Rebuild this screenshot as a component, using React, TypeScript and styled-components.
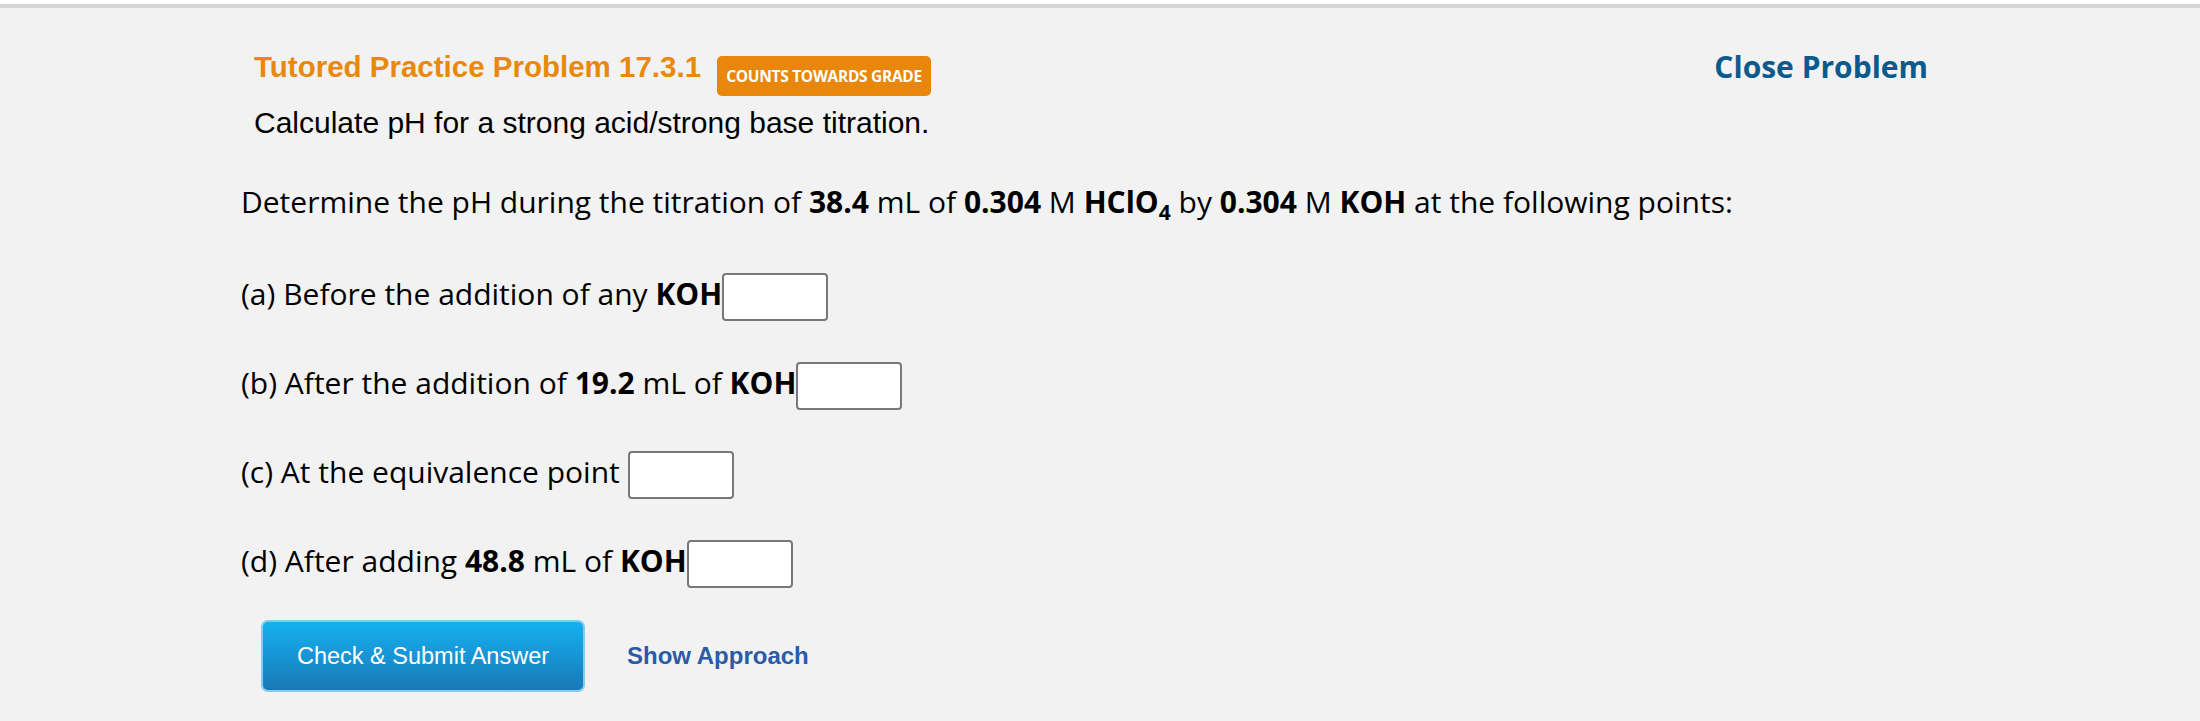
import React from "react";
import styled, { createGlobalStyle } from "styled-components";

const Global = createGlobalStyle`
  html, body { margin: 0; padding: 0; background: #ffffff; }
  #root { min-height: 721px; }
`;

const Page = styled.div`
  padding-top: 4px;
  min-height: 717px;
  display: flex;
  flex-direction: column;
`;

const TopBar = styled.div`
  height: 4px;
  background: #d6d6d6;
`;

const Panel = styled.main`
  flex: 1;
  background: #f2f2f2;
  padding: 39px 272px 0 241px;
  display: flex;
  flex-direction: column;
`;

const Header = styled.header`
  padding-left: 13px;
  display: flex;
  flex-direction: column;
`;

const HeaderRow = styled.div`
  display: flex;
  align-items: flex-start;
`;

const Title = styled.h1`
  margin: 0;
  font-family: "Liberation Sans", Arial, sans-serif;
  font-weight: 700;
  font-size: 29.5px;
  line-height: 40px;
  color: #e8890c;
`;

const Badge = styled.span`
  margin: 9px 0 0 16px;
  width: 214px;
  height: 40px;
  border-radius: 5px;
  background: #e8870b;
  color: #ffffff;
  font-family: "Open Sans", sans-serif;
  font-weight: 700;
  font-size: 15.5px;
  letter-spacing: -0.3px;
  display: flex;
  align-items: center;
  justify-content: center;
  text-transform: uppercase;
`;

const CloseLink = styled.a`
  margin-left: auto;
  font-family: "Open Sans", sans-serif;
  font-weight: 700;
  font-size: 30px;
  line-height: 40px;
  color: #0b5a8e;
  text-decoration: none;
  cursor: pointer;
`;

const Subtitle = styled.p`
  margin: 9px 0 0;
  font-family: "Liberation Sans", Arial, sans-serif;
  font-size: 30px;
  line-height: 36px;
  color: #000000;
`;

const Question = styled.p`
  margin: 41px 0 0;
  font-family: "Open Sans", sans-serif;
  font-size: 30px;
  line-height: 40px;
  color: #000000;

  sub {
    font-size: 21px;
    line-height: 0;
    vertical-align: -7px;
    font-weight: 700;
  }
`;

const Parts = styled.div`
  margin-top: 51px;
  display: flex;
  flex-direction: column;
  gap: 41px;
`;

const PartRow = styled.div`
  font-family: "Open Sans", sans-serif;
  font-size: 30px;
  line-height: 40px;
  color: #000000;
`;

const AnswerInput = styled.input`
  box-sizing: border-box;
  width: 106px;
  height: 48px;
  vertical-align: middle;
  border: 2px solid #787878;
  border-radius: 4px;
  background: #ffffff;
  padding: 0 6px;
  margin: 0;
  font-family: "Open Sans", sans-serif;
  font-size: 20px;
  outline: none;
`;

const Actions = styled.div`
  margin: 32px 0 0 20px;
  display: flex;
  align-items: center;
  gap: 42px;
`;

const SubmitButton = styled.button`
  box-sizing: border-box;
  width: 324px;
  height: 72px;
  border: 2px solid #80cdf1;
  border-radius: 7px;
  background: linear-gradient(to bottom, #15b1ef 0%, #1792d2 55%, #1a78b5 100%);
  color: #ffffff;
  font-family: "Liberation Sans", Arial, sans-serif;
  font-size: 23.5px;
  cursor: pointer;
  padding: 0;
`;

const ApproachLink = styled.a`
  font-family: "Liberation Sans", Arial, sans-serif;
  font-weight: 700;
  font-size: 24px;
  color: #2b5ba8;
  text-decoration: none;
  cursor: pointer;
`;

const parts: React.ReactNode[] = [
  <>(a) Before the addition of any <b>KOH</b></>,
  <>(b) After the addition of <b>19.2</b> mL of <b>KOH</b></>,
  <>(c) At the equivalence point </>,
  <>(d) After adding <b>48.8</b> mL of <b>KOH</b></>,
];

export default function App() {
  return (
    <>
      <Global />
      <Page>
        <TopBar />
        <Panel>
          <Header>
            <HeaderRow>
              <Title>Tutored Practice Problem 17.3.1</Title>
              <Badge>Counts towards grade</Badge>
              <CloseLink>Close Problem</CloseLink>
            </HeaderRow>
            <Subtitle>Calculate pH for a strong acid/strong base titration.</Subtitle>
          </Header>
          <Question>
            Determine the pH during the titration of <b>38.4</b> mL of <b>0.304</b> M{" "}
            <b>HClO</b><sub>4</sub> by <b>0.304</b> M <b>KOH</b> at the following points:
          </Question>
          <Parts>
            {parts.map((p, i) => (
              <PartRow key={i}>
                {p}
                <AnswerInput type="text" aria-label={`answer ${i}`} />
              </PartRow>
            ))}
          </Parts>
          <Actions>
            <SubmitButton>Check &amp; Submit Answer</SubmitButton>
            <ApproachLink>Show Approach</ApproachLink>
          </Actions>
        </Panel>
      </Page>
    </>
  );
}
